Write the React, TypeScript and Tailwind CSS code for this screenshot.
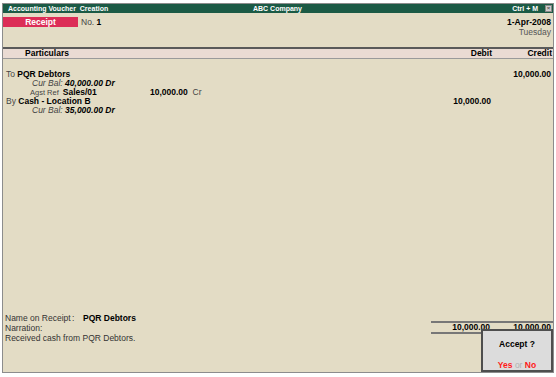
import React from "react";

const F = "font-['Liberation_Sans',Arial,sans-serif]";

export default function App() {
  return (
    <div className={`w-[556px] h-[377px] bg-white pt-[3px] pl-[2px] ${F} text-[8.5px] leading-[9px] text-[#222]`}>
      <div className="relative w-[552px] h-[370px] border border-[#8c8c8c] bg-[#e3dcc5] flex flex-col">
        {/* title bar */}
        <div className="h-[9px] bg-[#1b5a45] text-white font-bold text-[7px] leading-[9px] flex items-center pl-[5px] pr-[1px] whitespace-nowrap">
          <div className="w-[245px]">Accounting Voucher&nbsp; Creation</div>
          <div className="flex-1">ABC Company</div>
          <div className="mr-[7px]">Ctrl + M</div>
          <div className="w-[7px] h-[7px] bg-[#cfcfcf] border border-[#888] text-[#555] text-[6px] leading-[5px] flex items-center justify-center">×</div>
        </div>

        {/* voucher top */}
        <div className="h-[34px] flex justify-between">
          <div className="flex items-center h-[10px] mt-[4px]">
            <div className="w-[75px] h-[10px] bg-[#dc2d57] text-white font-bold text-[8.5px] leading-[10px] text-center">Receipt</div>
            <div className="ml-[3px] text-[#444]">
              No. <span className="font-bold text-black">1</span>
            </div>
          </div>
          <div className="pt-[5px] pr-[2px] text-right">
            <div className="font-bold text-black">1-Apr-2008</div>
            <div className="text-[#555] mt-[1px]">Tuesday</div>
          </div>
        </div>

        {/* column header */}
        <div className="border-t-2 border-[#5a5a5a] border-b border-b-[#9a9a9a] bg-[#eadbd3] h-[12px] flex items-center font-bold text-black">
          <div className="flex-1 pl-[22px]">Particulars</div>
          <div className="w-[62px] text-right">Debit</div>
          <div className="w-[60px] text-right mr-[1px]">Credit</div>
        </div>

        {/* body */}
        <div className="flex-1 pt-[11px] flex flex-col whitespace-nowrap">
          <Row
            left={
              <div className="pl-[3px]">
                <span className="text-[#444]">To </span>
                <span className="font-bold text-black">PQR Debtors</span>
              </div>
            }
            credit="10,000.00"
          />
          <Row
            left={
              <div className="pl-[29px] italic text-[#444]">
                Cur Bal: <span className="font-bold text-black">40,000.00 Dr</span>
              </div>
            }
          />
          <Row
            left={
              <div className="flex items-baseline">
                <div className="w-[147px] pl-[27px] flex items-baseline">
                  <span className="text-[#444] text-[7.5px]">Agst Ref</span>
                  <span className="ml-[4px] font-bold text-black">Sales/01</span>
                </div>
                <div>
                  <span className="font-bold text-black">10,000.00</span>
                  <span className="text-[#444]">&nbsp; Cr</span>
                </div>
              </div>
            }
          />
          <Row
            left={
              <div className="pl-[3px]">
                <span className="text-[#444]">By </span>
                <span className="font-bold text-black">Cash - Location B</span>
              </div>
            }
            debit="10,000.00"
          />
          <Row
            left={
              <div className="pl-[29px] italic text-[#444]">
                Cur Bal: <span className="font-bold text-black">35,000.00 Dr</span>
              </div>
            }
          />
        </div>

        {/* footer */}
        <div className="h-[58px] flex whitespace-nowrap">
          <div className="flex-1 pl-[2px] text-[#333]">
            <div className="h-[10px] flex">
              <span className="w-[67px]">Name on Receipt</span>
              <span className="w-[11px]">:</span>
              <span className="font-bold text-black">PQR Debtors</span>
            </div>
            <div className="h-[10px]">Narration:</div>
            <div className="h-[10px]">Received cash from PQR Debtors.</div>
          </div>
          <div className="w-[122px] pt-[7px]">
            <div className="h-[2px] bg-[#777]" />
            <div className="h-[9px] flex font-bold text-black leading-[9px]">
              <div className="w-[59px] text-right">10,000.00</div>
              <div className="w-[61px] text-right">10,000.00</div>
            </div>
            <div className="h-[2px] bg-[#777]" />
          </div>
        </div>

        {/* accept dialog */}
        <div className="absolute left-[478px] top-[325px] w-[72px] h-[43px] bg-[#dcdcdc] border-2 border-[#4e4e4e] flex flex-col items-center">
          <div className="mt-[9px] font-bold text-black">Accept ?</div>
          <div className="mt-[12px] font-bold">
            <span className="text-[#ff1a1a]">Yes</span>
            <span className="text-[#b0b0b0] font-normal"> or </span>
            <span className="text-[#ff1a1a]">No</span>
          </div>
        </div>
      </div>
    </div>
  );
}

function Row({ left, debit, credit }: { left: React.ReactNode; debit?: string; credit?: string }) {
  return (
    <div className="h-[9px] flex">
      <div className="flex-1">{left}</div>
      <div className="w-[62px] text-right font-bold text-black">{debit}</div>
      <div className="w-[60px] text-right font-bold text-black mr-[2px]">{credit}</div>
    </div>
  );
}
